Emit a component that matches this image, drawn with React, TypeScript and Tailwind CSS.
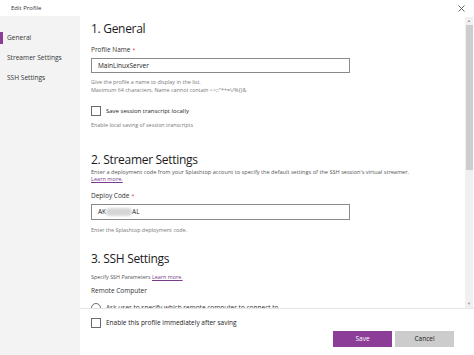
import React from "react";

const font = { fontFamily: '"Open Sans", "Noto Sans", sans-serif' };

function Req() {
  return <span className="ml-[2px] text-[#d13438] align-top text-[5px]">*</span>;
}

function Checkbox() {
  return <span className="inline-block w-[10px] h-[10px] border border-[#6b6b6b] bg-white shrink-0" />;
}

export default function App() {
  return (
    <div className="w-[474px] h-[355px] bg-white flex flex-col overflow-hidden text-[#222]" style={font}>
      {/* title bar */}
      <div className="h-[16px] flex items-center justify-between pl-[11px] pr-[9px] shrink-0">
        <span className="text-[6px] text-[#333]">Edit Profile</span>
        <svg width="7" height="7" viewBox="0 0 7 7" className="text-[#555]">
          <path d="M0.5 0.5 L6.5 6.5 M6.5 0.5 L0.5 6.5" stroke="currentColor" strokeWidth="0.9" />
        </svg>
      </div>

      <div className="flex flex-1 min-h-0">
        {/* sidebar */}
        <nav className="w-[80px] bg-[#f3f3f3] shrink-0 pt-[16px] flex flex-col gap-[8px] text-[6.6px] text-[#333]">
          <div className="relative h-[12px] flex items-center pl-[7px]">
            <span className="absolute left-0 top-0 w-[3px] h-[12px] bg-[#8b3d98]" />
            General
          </div>
          <div className="h-[12px] flex items-center pl-[7px]">Streamer Settings</div>
          <div className="h-[12px] flex items-center pl-[7px]">SSH Settings</div>
        </nav>

        <div className="flex-1 flex flex-col min-w-0">
          {/* scroll area */}
          <div className="h-[292px] flex shrink-0">
            <div className="flex-1 overflow-hidden pl-[11px] pt-[5px]">
              <h2 className="text-[12px] tracking-[-0.3px] leading-[16px] text-[#1b1b1b]">1. General</h2>
              <div className="mt-[9px] text-[6.5px] leading-[8px] text-[#333]">
                Profile Name<Req />
              </div>
              <div className="mt-[4px] w-[259px] h-[15px] border border-[#8a8a8a] flex items-center pl-[6px] text-[6.5px] text-[#222]">
                MainLinuxServer
              </div>
              <p className="mt-[5px] text-[5.4px] leading-[8px] text-[#777]">Give the profile a name to display in the list.</p>
              <p className="text-[5.4px] leading-[8px] text-[#777]">
                Maximum 64 characters. Name cannot contain &lt;&gt;;:"*+=\/%{"{}"}&amp;
              </p>
              <div className="mt-[12px] flex items-center gap-[5px] text-[6px] text-[#222]">
                <Checkbox />
                Save session transcript locally
              </div>
              <p className="mt-[5px] text-[5.4px] leading-[8px] text-[#777]">Enable local saving of session transcripts</p>

              <h2 className="mt-[23px] text-[12px] tracking-[-0.3px] leading-[16px] text-[#1b1b1b]">2. Streamer Settings</h2>
              <p className="mt-[1px] text-[5.6px] leading-[7px] text-[#555]">
                Enter a deployment code from your Splashtop account to specify the default settings of the SSH session's virtual streamer.
              </p>
              <a className="block text-[5.6px] leading-[7px] text-[#7a3d8c] underline">Learn more.</a>
              <div className="mt-[9px] text-[6.5px] leading-[8px] text-[#333]">
                Deploy Code<Req />
              </div>
              <div className="mt-[4px] w-[259px] h-[16px] border border-[#8a8a8a] flex items-center pl-[6px] text-[6.5px] text-[#222]">
                AK
                <span className="inline-block w-[26px] h-[8px] rounded-full bg-[#d6d6d6] blur-[1px]" />
                AL
              </div>
              <p className="mt-[6px] text-[5.4px] leading-[8px] text-[#777]">Enter the Splashtop deployment code.</p>

              <h2 className="mt-[17px] text-[12px] tracking-[-0.3px] leading-[16px] text-[#1b1b1b]">3. SSH Settings</h2>
              <p className="mt-[6px] text-[5.4px] leading-[8px] text-[#555]">
                Specify SSH Parameters <a className="text-[#7a3d8c] underline">Learn more.</a>
              </p>
              <div className="mt-[6px] text-[6.5px] leading-[8px] text-[#333]">Remote Computer</div>
              <div className="mt-[8px] flex items-center gap-[5px] text-[6.5px] text-[#333]">
                <span className="inline-block w-[10px] h-[10px] rounded-full border border-[#6b6b6b] shrink-0" />
                Ask user to specify which remote computer to connect to
              </div>
            </div>
            {/* scrollbar */}
            <div className="w-[8px] bg-[#f0f0f0] flex flex-col items-center mt-[1px] mr-[1px]">
              <span className="text-[4px] leading-[8px] text-[#999]">▲</span>
              <div className="w-[7px] h-[145px] bg-[#cdcdcd]" />
              <div className="flex-1" />
              <span className="text-[4px] leading-[8px] text-[#999]">▼</span>
            </div>
          </div>

          {/* footer */}
          <div className="flex-1 border-t border-[#e6e6e6] pl-[11px] pr-[20px] pt-[9px] flex flex-col">
            <div className="flex items-center gap-[5px] text-[6.5px] text-[#222]">
              <Checkbox />
              Enable this profile immediately after saving
            </div>
            <div className="mt-[3px] flex justify-end gap-[3px]">
              <button className="w-[59px] h-[16px] bg-[#8b3d98] text-white text-[6.5px]">Save</button>
              <button className="w-[59px] h-[16px] bg-[#cccccc] text-[#222] text-[6.5px]">Cancel</button>
            </div>
          </div>
        </div>
      </div>
    </div>
  );
}
